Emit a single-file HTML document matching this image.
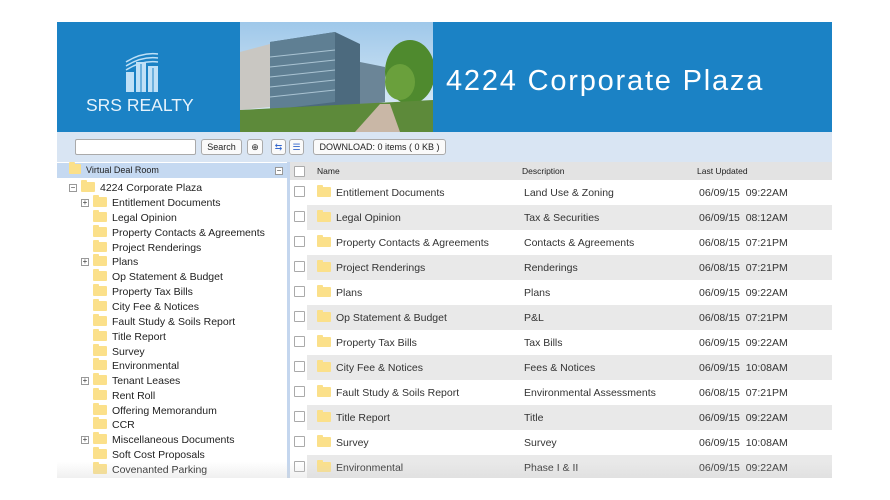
<!DOCTYPE html><html><head><style>
*{margin:0;padding:0;box-sizing:border-box}
body{width:890px;height:500px;background:#fff;font-family:"Liberation Sans",sans-serif;position:relative;overflow:hidden}
.a{position:absolute}
.hdr{left:57px;top:22px;width:775px;height:110px;background:#1b82c5}
.tb{left:57px;top:132px;width:775px;height:30px;background:#d9e5f3}
.btn{position:absolute;top:139px;height:16px;border:1px solid #aaa;border-radius:3px;background:#fafafa;font-size:9px;color:#222;line-height:14px;text-align:center}
.tree{left:57px;top:162px;width:230px;height:316px;background:#fff}
.split{left:287px;top:162px;width:3px;height:316px;background:#c4d6ee}
.ti{position:absolute;font-size:10.5px;color:#222;height:15px;line-height:15px;white-space:nowrap}
.fd{display:inline-block;width:14px;height:10px;background:#fbe08a;border-radius:1px;vertical-align:-1px;margin-right:5px;position:relative}
.fd:before{content:"";position:absolute;left:0;top:-2px;width:6px;height:3px;background:#fbe08a;border-radius:1px 1px 0 0}
.pl{position:absolute;width:8px;height:8px;border:1px solid #999;background:#fff;font-size:8px;line-height:6px;text-align:center;color:#333}
.th{left:290px;top:162px;width:542px;height:18px;background:#e3e3e3;font-size:8.5px;color:#222}
.row{position:absolute;left:290px;width:542px;height:25px;font-size:10.5px;color:#333}
.row.g:after{content:"";position:absolute;left:17px;top:0;right:0;bottom:0;background:#e9e9e9;z-index:-1}
.row span{position:absolute;top:7px;white-space:nowrap}
.cb{position:absolute;left:4px;top:6px;width:11px;height:11px;border:1px solid #aaa;background:#fff;border-radius:1px}
.fade{left:57px;top:462px;width:775px;height:16px;background:linear-gradient(rgba(255,255,255,0),rgba(210,210,210,.35))}
</style></head><body>
<div class="a hdr"></div>
<svg class="a" style="left:122px;top:50px" width="40" height="42" viewBox="0 0 40 42">
<g fill="none" stroke="#bfe0f7" stroke-width="1.5"><path d="M4 12 Q20 2 36 4"/><path d="M4 16 Q20 6 36 8"/><path d="M4 20 Q20 10 36 12"/></g>
<rect x="4" y="22" width="8" height="20" fill="#bfe0f7"/><rect x="14" y="12" width="10" height="30" fill="#bfe0f7"/><rect x="26" y="16" width="10" height="26" fill="#bfe0f7"/>
<line x1="19" y1="14" x2="19" y2="42" stroke="#1b82c5"/><line x1="31" y1="18" x2="31" y2="42" stroke="#1b82c5"/></svg>
<div class="a" style="left:86px;top:95px;font-size:17.5px;color:#e6f3fc">SRS REALTY</div>
<svg class="a" style="left:240px;top:22px" width="193" height="110">
<defs><linearGradient id="s" x1="0" y1="0" x2="0" y2="1"><stop offset="0" stop-color="#9fc8ea"/><stop offset="1" stop-color="#e6f1f8"/></linearGradient></defs>
<rect width="193" height="110" fill="url(#s)"/>
<polygon points="0,30 30,22 30,85 0,88" fill="#c9c7c2"/>
<polygon points="30,20 95,10 120,22 120,85 30,88" fill="#4c6a7e"/>
<polygon points="30,20 95,10 95,80 30,88" fill="#5f7f93"/>
<g stroke="#a9c3d2" stroke-width="1"><line x1="30" y1="35" x2="95" y2="28"/><line x1="30" y1="45" x2="95" y2="38"/><line x1="30" y1="55" x2="95" y2="48"/><line x1="30" y1="65" x2="95" y2="58"/><line x1="30" y1="75" x2="95" y2="68"/></g>
<polygon points="120,40 145,45 145,80 120,84" fill="#6b8597"/>
<ellipse cx="170" cy="50" rx="25" ry="32" fill="#4f8a2e"/><ellipse cx="160" cy="60" rx="15" ry="18" fill="#6aa03c"/>
<polygon points="0,88 193,78 193,110 0,110" fill="#5d8a3a"/>
<polygon points="115,110 140,82 150,82 160,110" fill="#c9b7a6"/>
</svg>
<div class="a" style="left:446px;top:65px;font-size:29px;color:#fff;letter-spacing:1.8px">4224 Corporate Plaza</div>
<div class="a tb"></div>
<div class="a" style="left:75px;top:139px;width:121px;height:16px;border:1px solid #aaa;background:#fff;border-radius:2px"></div>
<div class="btn" style="left:201px;width:41px">Search</div>
<div class="btn" style="left:247px;width:16px">⊕</div>
<div class="btn" style="left:271px;width:15px;color:#36c">⇆</div>
<div class="btn" style="left:289px;width:15px;color:#36c">☰</div>
<div class="btn" style="left:313px;width:133px">DOWNLOAD: 0 items ( 0 KB )</div>
<div class="a tree"></div>
<div class="a" style="left:57px;top:163px;width:230px;height:15px;background:#c5d9f1"></div>
<div class="ti" style="left:69px;top:163px;font-size:9px"><span class="fd" style="width:12px"></span>Virtual Deal Room</div>
<div class="pl" style="left:275px;top:167px">−</div>
<div class="a split"></div>
<div class="pl" style="left:69px;top:184px">−</div>
<div class="ti" style="left:81px;top:181px"><span class="fd"></span>4224 Corporate Plaza</div>
<div class="pl" style="left:81px;top:199px">+</div><div class="pl" style="left:81px;top:258px">+</div><div class="pl" style="left:81px;top:377px">+</div><div class="pl" style="left:81px;top:436px">+</div>
<div class="ti" style="left:93px;top:196px"><span class="fd"></span>Entitlement Documents</div>
<div class="ti" style="left:93px;top:211px"><span class="fd"></span>Legal Opinion</div>
<div class="ti" style="left:93px;top:226px"><span class="fd"></span>Property Contacts &amp; Agreements</div>
<div class="ti" style="left:93px;top:241px"><span class="fd"></span>Project Renderings</div>
<div class="ti" style="left:93px;top:255px"><span class="fd"></span>Plans</div>
<div class="ti" style="left:93px;top:270px"><span class="fd"></span>Op Statement &amp; Budget</div>
<div class="ti" style="left:93px;top:285px"><span class="fd"></span>Property Tax Bills</div>
<div class="ti" style="left:93px;top:300px"><span class="fd"></span>City Fee &amp; Notices</div>
<div class="ti" style="left:93px;top:315px"><span class="fd"></span>Fault Study &amp; Soils Report</div>
<div class="ti" style="left:93px;top:330px"><span class="fd"></span>Title Report</div>
<div class="ti" style="left:93px;top:345px"><span class="fd"></span>Survey</div>
<div class="ti" style="left:93px;top:359px"><span class="fd"></span>Environmental</div>
<div class="ti" style="left:93px;top:374px"><span class="fd"></span>Tenant Leases</div>
<div class="ti" style="left:93px;top:389px"><span class="fd"></span>Rent Roll</div>
<div class="ti" style="left:93px;top:404px"><span class="fd"></span>Offering Memorandum</div>
<div class="ti" style="left:93px;top:418px"><span class="fd"></span>CCR</div>
<div class="ti" style="left:93px;top:433px"><span class="fd"></span>Miscellaneous Documents</div>
<div class="ti" style="left:93px;top:448px"><span class="fd"></span>Soft Cost Proposals</div>
<div class="ti" style="left:93px;top:463px"><span class="fd"></span>Covenanted Parking</div>
<div class="a th"><div class="cb" style="top:4px"></div><span class="a" style="left:27px;top:4px">Name</span><span class="a" style="left:232px;top:4px">Description</span><span class="a" style="left:407px;top:4px">Last Updated</span></div>
<div class="row" style="top:180px"><div class="cb"></div><span style="left:27px"><i class="fd"></i>Entitlement Documents</span><span style="left:234px">Land Use &amp; Zoning</span><span style="left:409px">06/09/15&nbsp; 09:22AM</span></div>
<div class="row g" style="top:205px"><div class="cb"></div><span style="left:27px"><i class="fd"></i>Legal Opinion</span><span style="left:234px">Tax &amp; Securities</span><span style="left:409px">06/09/15&nbsp; 08:12AM</span></div>
<div class="row" style="top:230px"><div class="cb"></div><span style="left:27px"><i class="fd"></i>Property Contacts &amp; Agreements</span><span style="left:234px">Contacts &amp; Agreements</span><span style="left:409px">06/08/15&nbsp; 07:21PM</span></div>
<div class="row g" style="top:255px"><div class="cb"></div><span style="left:27px"><i class="fd"></i>Project Renderings</span><span style="left:234px">Renderings</span><span style="left:409px">06/08/15&nbsp; 07:21PM</span></div>
<div class="row" style="top:280px"><div class="cb"></div><span style="left:27px"><i class="fd"></i>Plans</span><span style="left:234px">Plans</span><span style="left:409px">06/09/15&nbsp; 09:22AM</span></div>
<div class="row g" style="top:305px"><div class="cb"></div><span style="left:27px"><i class="fd"></i>Op Statement &amp; Budget</span><span style="left:234px">P&amp;L</span><span style="left:409px">06/08/15&nbsp; 07:21PM</span></div>
<div class="row" style="top:330px"><div class="cb"></div><span style="left:27px"><i class="fd"></i>Property Tax Bills</span><span style="left:234px">Tax Bills</span><span style="left:409px">06/09/15&nbsp; 09:22AM</span></div>
<div class="row g" style="top:355px"><div class="cb"></div><span style="left:27px"><i class="fd"></i>City Fee &amp; Notices</span><span style="left:234px">Fees &amp; Notices</span><span style="left:409px">06/09/15&nbsp; 10:08AM</span></div>
<div class="row" style="top:380px"><div class="cb"></div><span style="left:27px"><i class="fd"></i>Fault Study &amp; Soils Report</span><span style="left:234px">Environmental Assessments</span><span style="left:409px">06/08/15&nbsp; 07:21PM</span></div>
<div class="row g" style="top:405px"><div class="cb"></div><span style="left:27px"><i class="fd"></i>Title Report</span><span style="left:234px">Title</span><span style="left:409px">06/09/15&nbsp; 09:22AM</span></div>
<div class="row" style="top:430px"><div class="cb"></div><span style="left:27px"><i class="fd"></i>Survey</span><span style="left:234px">Survey</span><span style="left:409px">06/09/15&nbsp; 10:08AM</span></div>
<div class="row g" style="top:455px;height:23px;overflow:hidden"><div class="cb"></div><span style="left:27px"><i class="fd"></i>Environmental</span><span style="left:234px">Phase I &amp; II</span><span style="left:409px">06/09/15&nbsp; 09:22AM</span></div>
<div class="a fade"></div>
</body></html>
